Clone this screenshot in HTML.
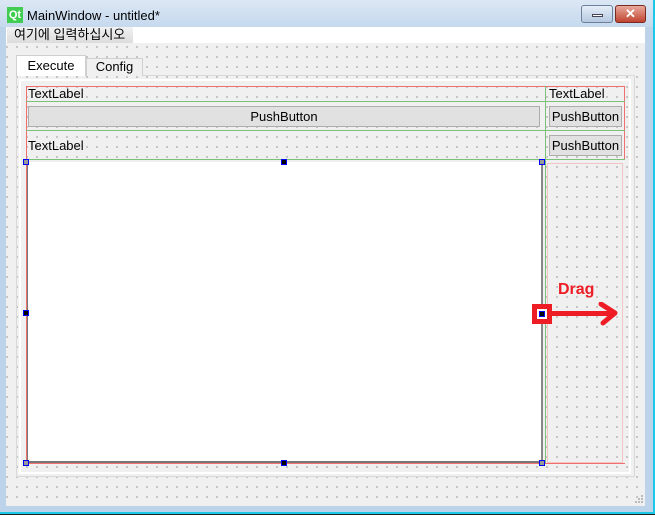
<!DOCTYPE html>
<html><head><meta charset="utf-8"><style>
*{margin:0;padding:0;box-sizing:border-box}
body{width:655px;height:515px;overflow:hidden;background:#bcd3ea;font-family:"Liberation Sans","Noto Sans CJK KR",sans-serif;font-size:13px;color:#000;position:relative}
.a{position:absolute}
.dots{background-color:#f0f0f0;background-image:radial-gradient(circle at 1px 1px,#a0a0a0 0.7px,transparent 0.9px);background-size:10px 10px;}
.btn{position:absolute;background:#e1e1e1;border:1px solid #adadad;text-align:center;line-height:19px;font-size:13px}
</style></head><body>
<div class="a" style="left:0;top:0;width:655px;height:27px;background:linear-gradient(#dbe7f4,#c6d9ee)"></div>
<div class="a" style="left:7px;top:7px;width:16px;height:16px;background:#41cd52;color:#fff;font-weight:bold;font-size:11px;line-height:16px;text-align:center">Qt</div>
<div class="a" style="left:27px;top:8px;font-size:13px">MainWindow - untitled*</div>
<div class="a" style="left:581px;top:5px;width:32px;height:18px;border:1px solid #6d7f99;border-radius:3px;background:linear-gradient(#e6eef8,#b5c8e0)"><div class="a" style="left:10px;top:8px;width:11px;height:3px;background:#fff;border:1px solid #445"></div></div>
<div class="a" style="left:615px;top:5px;width:31px;height:18px;border:1px solid #7a2a20;border-radius:3px;background:linear-gradient(#e9a99c,#c0442f);color:#fff;font-weight:bold;text-align:center;line-height:16px;font-size:13px">✕</div>
<div class="a" style="left:6px;top:27px;width:639px;height:479px;background:#f0f0f0"></div>
<div class="a" style="left:6px;top:27px;width:639px;height:16px;background:#fff"></div>
<div class="a" style="left:7px;top:27px;width:126px;height:16px;background:linear-gradient(#f2f2f2,#dcdcdc);padding-left:7px;line-height:16px">여기에 입력하십시오</div>
<div class="a dots" style="left:6px;top:43px;width:639px;height:463px;background-position:0px 3px"></div>
<div class="a" style="left:653px;top:0;width:2px;height:515px;background:#1bc8e8"></div>
<div class="a" style="left:0;top:512px;width:655px;height:3px;background:#1bc8e8;border-bottom:1px solid #222"></div>
<div class="a" style="left:16px;top:75px;width:619px;height:402px;border:1px solid #d9d9d9;background:#fff"></div>
<div class="a dots" style="left:17px;top:76px;width:617px;height:400px;background-position:9px 0px"></div>
<div class="a" style="left:19px;top:79px;width:612px;height:395px;border:2px solid #fff"></div>
<div class="a" style="left:86px;top:58px;width:57px;height:18px;border:1px solid #d0d0d0;border-bottom:none;background:#f0f0f0;text-align:center;line-height:16px">Config</div>
<div class="a" style="left:16px;top:55px;width:70px;height:21px;border:1px solid #d0d0d0;border-bottom:none;background:#fff;text-align:center;line-height:19px">Execute</div>
<div class="a" style="left:26px;top:86px;width:599px;height:1px;background:#f07070"></div>
<div class="a" style="left:26px;top:86px;width:1px;height:378px;background:#f07070"></div>
<div class="a" style="left:624px;top:86px;width:1px;height:74px;background:#f07070"></div>
<div class="a" style="left:26px;top:101px;width:599px;height:1px;background:#7cc07c"></div>
<div class="a" style="left:26px;top:130px;width:599px;height:1px;background:#7cc07c"></div>
<div class="a" style="left:26px;top:159px;width:599px;height:1px;background:#7cc07c"></div>
<div class="a" style="left:545px;top:86px;width:1px;height:378px;background:#7cc07c"></div>
<div class="a" style="left:28px;top:86px">TextLabel</div>
<div class="a" style="left:549px;top:86px">TextLabel</div>
<div class="a" style="left:28px;top:138px">TextLabel</div>
<div class="btn" style="left:28px;top:106px;width:512px;height:21px">PushButton</div>
<div class="btn" style="left:549px;top:106px;width:73px;height:21px">PushButton</div>
<div class="btn" style="left:549px;top:135px;width:73px;height:21px">PushButton</div>
<div class="a" style="left:547px;top:163px;width:76px;height:300px;border:1px solid #f2c4c4"></div>
<div class="a" style="left:26px;top:463px;width:599px;height:1px;background:#f07070"></div>
<div class="a" style="left:27px;top:162px;width:516px;height:301px;background:#fff;border-left:1px solid #777;border-right:2px solid #888;border-bottom:2px solid #777"></div>
<div class="a" style="left:23px;top:159px;width:6px;height:6px;background:#999;border:1px solid #00f"></div>
<div class="a" style="left:539px;top:159px;width:6px;height:6px;background:#999;border:1px solid #00f"></div>
<div class="a" style="left:23px;top:460px;width:6px;height:6px;background:#999;border:1px solid #00f"></div>
<div class="a" style="left:539px;top:460px;width:6px;height:6px;background:#999;border:1px solid #00f"></div>
<div class="a" style="left:281px;top:159px;width:6px;height:6px;background:#000;border:1px solid #00f"></div>
<div class="a" style="left:281px;top:460px;width:6px;height:6px;background:#000;border:1px solid #00f"></div>
<div class="a" style="left:23px;top:310px;width:6px;height:6px;background:#000;border:1px solid #00f"></div>
<div class="a" style="left:532px;top:304px;width:20px;height:20px;border:5px solid #ee1c25;background:#fff"></div>
<div class="a" style="left:539px;top:311px;width:6px;height:6px;background:#000;border:1px solid #00f"></div>
<div class="a" style="left:552px;top:311px;width:61px;height:5px;background:#ee1c25"></div>
<svg class="a" style="left:598px;top:302px" width="22" height="24"><path d="M3 2 L17 11 L5 21" stroke="#ee1c25" stroke-width="5" fill="none" stroke-linecap="round" stroke-linejoin="round"/></svg>
<div class="a" style="left:558px;top:281px;color:#ee1c25;font-weight:bold;font-size:16px">Drag</div>
<svg class="a" style="left:634px;top:494px" width="10" height="10"><g fill="#bbb"><rect x="7" y="1" width="2" height="2"/><rect x="4" y="4" width="2" height="2"/><rect x="7" y="4" width="2" height="2"/><rect x="1" y="7" width="2" height="2"/><rect x="4" y="7" width="2" height="2"/><rect x="7" y="7" width="2" height="2"/></g></svg>
</body></html>
